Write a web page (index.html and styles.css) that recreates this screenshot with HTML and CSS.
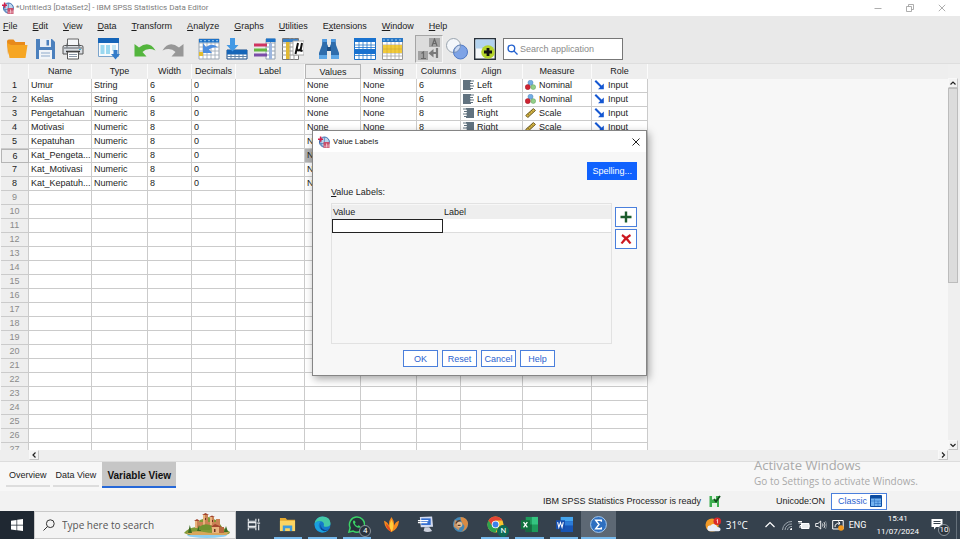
FILE: index.html
```
<!DOCTYPE html>
<html lang="en">
<head>
    <meta charset="UTF-8">
    <meta name="viewport" content="width=device-width, initial-scale=1.0">
    <title>*Untitled3 [DataSet2] - IBM SPSS Statistics Data Editor</title>
    <link rel="stylesheet" href="styles.css">
</head>
<body>
    <!-- Shared icons -->
    <svg class="hidden">
        <symbol id="app" viewBox="0 0 12 12">
            <circle cx="6.4" cy="6" r="5" fill="#bcd5ec" stroke="#3f70b2"/>
            <path d="M2 7.5h9M6.4 1v10M3.5 2.5q-2 4 1 8" stroke="#5582b8" fill="none" stroke-width=".8"/>
            <path d="M0 3.2h5M2.6.5v5.2" stroke="#d3204b" stroke-width="1.5"/>
            <path d="M5.5 6h6v6h-6z" fill="#c9506b"/>
            <path d="M7 11.5v-2M8.5 11.5v-4M10 11.5v-3" stroke="#f6d5dc" stroke-width=".8"/>
        </symbol>
        <symbol id="left" viewBox="0 0 11 10">
            <path d="M0 0h8v10H0z" fill="#61727f"/>
            <path d="M7 1h4M7 3.500h3M7 6h4M7 8.500h3" stroke="#61727f"/>
            <path d="M7 2.300h1M7 4.700h1M7 7.200h1" stroke="#fff"/>
        </symbol>
        <symbol id="right" viewBox="0 0 11 10">
            <path d="M3 0h8v10H3z" fill="#61727f"/>
            <path d="M0 1h4M1 3.500h3M0 6h4M1 8.500h3" stroke="#61727f"/>
            <path d="M3 2.300h1M3 4.700h1M3 7.200h1" stroke="#fff"/>
        </symbol>
        <symbol id="nominal" viewBox="0 0 12 11">
            <circle cx="6" cy="3" r="2.800" fill="#72aee3" stroke="#4b7fb8" stroke-width=".5"/>
            <circle cx="3" cy="7.800" r="2.800" fill="#cf2433" stroke="#97131f" stroke-width=".5"/>
            <circle cx="9" cy="7.800" r="2.700" fill="#93cf88" stroke="#4f9448" stroke-width=".5"/>
        </symbol>
        <symbol id="scale" viewBox="0 0 12 11">
            <path d="M.8 8.200L9.200.6l2.200 2.200-8.400 7.700z" fill="#d5b544" stroke="#5c4a12"/>
            <path d="M3 6.600l1.200 1.200M5 4.600l1.200 1.200M7 2.600l1.200 1.200" stroke="#5c4a12" stroke-width=".8"/>
        </symbol>
        <symbol id="input" viewBox="0 0 10 10">
            <path d="M.8.8l6.500 6.500" stroke="#1457d2" stroke-width="2"/>
            <path d="M9.300 3.500v5.800H3.500z" fill="#1457d2"/>
        </symbol>
    </svg>

    <header class="titlebar">
        <svg class="app-icon"><use href="#app"/></svg>
        <span class="title">*Untitled3 [DataSet2] - IBM SPSS Statistics Data Editor</span>
        <div class="window-buttons">
            <button aria-label="Minimize"><svg viewBox="0 0 8 8"><path d="M.5 4.500h7"/></svg></button>
            <button aria-label="Restore"><svg viewBox="0 0 8 8"><path d="M.5 2.500h5v5h-5zM2.500 2.500v-2h5v5h-2"/></svg></button>
            <button aria-label="Close"><svg viewBox="0 0 8 8"><path d="M.8.8l6.400 6.400M7.200.8L.8 7.200"/></svg></button>
        </div>
    </header>

    <nav class="menubar">
        <button><u>F</u>ile</button>
        <button><u>E</u>dit</button>
        <button><u>V</u>iew</button>
        <button><u>D</u>ata</button>
        <button><u>T</u>ransform</button>
        <button><u>A</u>nalyze</button>
        <button><u>G</u>raphs</button>
        <button><u>U</u>tilities</button>
        <button>E<u>x</u>tensions</button>
        <button><u>W</u>indow</button>
        <button><u>H</u>elp</button>
    </nav>

    <div class="toolbar">
        <div class="tool-group">
            <button aria-label="Open"><svg viewBox="0 0 22 22"><path d="M1 3.500q0-2 2-2h4.500l2 2.500H19v4H4L2 17z" fill="#e88a1a"/><path d="M5 7h16.500l-2 13H3.500L1 5z" fill="#f6a623"/></svg></button>
            <button aria-label="Save"><svg viewBox="0 0 22 22"><path d="M2 1h16l3 3v17H2z" fill="#4b80bd"/><path d="M6 1h11v8H6z" fill="#e9eef4"/><path d="M12.500 2h2.500v5.500h-2.500z" fill="#4b80bd"/><path d="M5 12h13v9H5z" fill="#f1f4f8"/><path d="M7 15h9M7 18h9" stroke="#8da9ca"/></svg></button>
            <button aria-label="Print"><svg viewBox="0 0 22 22"><path d="M5.500 1h11v8h-11z" fill="#f4f6f8" stroke="#666"/><path d="M2.500 7.500h17q1.500 0 1.500 1.500v7H1V9q0-1.500 1.500-1.500z" fill="#d9dde2" stroke="#555"/><path d="M2 10h18M5 9.500V5.500M17 9.500V5.500" stroke="#5b6066"/><path d="M4 13.500h14" stroke="#333" stroke-width="1.500"/><path d="M5.500 14h11v7h-11z" fill="#fff" stroke="#555"/><path d="M7 16.500h8M7 18.500h8" stroke="#8c98a8"/><path d="M17 11.500h2" stroke="#3ab4d8"/></svg></button>
        </div>
        <div class="tool-group">
            <button aria-label="Recall dialogs"><svg viewBox="0 0 22 22"><path d="M.5.500h20v18H.5z" fill="#f7fafc" stroke="#7ba4cc"/><path d="M0 0h21v5H0z" fill="#1464b8"/><path d="M2.500 7h4v9h-4zM8 7h4v9H8z" fill="#9ad8f0"/><path d="M14 7h4v6h-4z" fill="#c5e7f4"/><path d="M15.500 12h4v4h2.500l-4.500 5.500L13 16h2.500z" fill="#347cc9"/></svg></button>
        </div>
        <div class="tool-group">
            <button aria-label="Undo"><svg viewBox="0 0 22 22"><path d="M.5 6v12.500h12l-4-4.500q5-5 13-1.500Q15 1.500 5 9.500z" fill="#53b53d"/></svg></button>
            <button aria-label="Redo"><svg viewBox="0 0 22 22"><path d="M21.500 6v12.500h-12l4-4.500q-5-5-13-1.500Q7 1.500 17 9.500z" fill="#979797"/></svg></button>
        </div>
        <div class="tool-group">
            <button aria-label="Go to case"><svg viewBox="0 0 22 22"><path d="M1 1h20v20H1z" fill="#fff" stroke="#9aa6b2"/><path d="M1 5h20M1 9h20M1 13h20M1 17h20M5 1v20M9 1v20M13 1v20M17 1v20" stroke="#9aa6b2" stroke-width=".8"/><path d="M1 1h20v3.500H1z" fill="#1c72c8"/><path d="M2 2.700h18" stroke="#9fccef" stroke-dasharray="2 2"/><path d="M1 14h4v4H1z" fill="#e3bd2d"/><path d="M5 5v10h9l-3-3.500q4-3 9-2-5-5-12-.5z" fill="#4b8de0"/></svg></button>
            <button aria-label="Go to variable"><svg viewBox="0 0 22 22"><path d="M1 12h20v9H1z" fill="#fff" stroke="#174b87"/><path d="M1 12h20v4.500H1z" fill="#1565b8"/><path d="M1 18.500h20M5 16v5M9 16v5M13 16v5M17 16v5" stroke="#6184aa"/><path d="M4 0h5v7h3.500l-6 6.500L.5 7H4z" fill="#4399e5"/></svg></button>
            <button aria-label="Variables"><svg viewBox="0 0 22 22"><path d="M12 1h9v20h-9z" fill="#fff" stroke="#93a0ae"/><path d="M12 5h9M12 9h9M12 13h9M12 17h9M16.500 1v20" stroke="#93a0ae"/><path d="M12 .500h9.500V4H12z" fill="#1c72c8"/><path d="M15 5h3v16h-3z" fill="#9cb6df"/><path d="M0 7h13" stroke="#d03461" stroke-width="3"/><path d="M0 12h13" stroke="#65b83f" stroke-width="3"/><path d="M0 17h13" stroke="#7a4ca8" stroke-width="3"/></svg></button>
            <button aria-label="Descriptive statistics"><svg viewBox="0 0 22 22"><path d="M.5.500h16v21H.5z" fill="#fff" stroke="#777"/><path d="M0 5h17M0 9h17M0 13h17M0 17h17M8 0v22M12 0v22" stroke="#999"/><path d="M1 1h15v3H1z" fill="#3a80c6"/><path d="M4 4h3.500v17H4z" fill="#e2b932"/><path d="M11 3h11v14H11z" fill="#fff" stroke="#aaa"/><path d="M13.500 16l2.500-11M20 5l-1.500 7.500 2 .5M15 11q1.500 3 4-.5" fill="none" stroke="#111" stroke-width="2"/></svg></button>
        </div>
        <div class="tool-group">
            <button aria-label="Find"><svg viewBox="0 0 22 22"><path d="M4.500 1h4.500v5l1 2v5H9v8H1v-6L4 7zM17.500 1H13v5l-1 2v5h1v8h8v-6L18 7z" fill="#2f6dac"/><path d="M9 9h4v4H9z" fill="#204f82"/><path d="M4.500 1h4.500v3H4.500zM13 1h4.500v3H13z" fill="#4f9be2"/><path d="M1 17h8v4H1zM13 17h8v4h-8z" fill="#5ea7e6"/></svg></button>
        </div>
        <div class="tool-group">
            <button aria-label="Split file"><svg viewBox="0 0 22 22"><path d="M.5.500h21v21H.5z" fill="#fff" stroke="#1c72c8"/><path d="M.5 7h21M.5 17.500h21M5 4v18M9 4v18M13 4v18M17 4v18" stroke="#2a78c8" stroke-width=".8"/><path d="M0 0h22v4H0zM0 11h22v5H0z" fill="#1972cf"/><path d="M0 9.500h22" stroke="#1972cf" stroke-width=".8"/></svg></button>
            <button aria-label="Select cases"><svg viewBox="0 0 22 22"><path d="M.5.500h20v21H.5z" fill="#fff" stroke="#999"/><path d="M.5 7h20M.5 11h20M.5 15h20M.5 18h20M5 0v22M9 0v22M13 0v22M17 0v22" stroke="#a5a5a5" stroke-width=".8"/><path d="M0 0h21v4H0z" fill="#2876c5"/><path d="M1 7h19v8H1z" fill="#f2cb3c"/><path d="M5 7v8M9 7v8M13 7v8M17 7v8M1 11h19" stroke="#c5a12e" stroke-width=".5"/><path d="M1 2h19" stroke="#9fccef" stroke-dasharray="2 2"/></svg></button>
        </div>
        <div class="tool-group last">
            <button class="pressed" aria-label="Value labels" aria-pressed="true"><svg viewBox="0 0 22 22"><path d="M11 0h11v9H11zM0 13h10v9H0z" fill="#a2a2a2"/><path d="M14 8l2.500-7L19 8M15 5.500h3M3.500 15.500L5.500 14v6.500M3 20.500h5" stroke="#686868" fill="none" stroke-width="1.200"/><path d="M19 10v10M20 15h-7" stroke="#7b7b7b" stroke-width="2.200"/><path d="M15.500 11v8.500L10.500 15.300z" fill="#7b7b7b"/></svg></button>
            <button aria-label="Use variable sets"><svg viewBox="0 0 22 22"><circle cx="7.500" cy="7.500" r="7" fill="#f4f7fb" stroke="#9aa4ae"/><circle cx="14.500" cy="14" r="7" fill="#7ea3e6" stroke="#4f79c4"/><path d="M14.500 7A7 7 0 0 0 8 14.500 7 7 0 0 0 14.500 7z" fill="#cbdaf4" stroke="#7992b9"/></svg></button>
            <button aria-label="Customize toolbar"><svg viewBox="0 0 22 22"><path d="M.7.700h20.600v20.600H.7z" fill="#f5f8fa" stroke="#29313a" stroke-width="1.400"/><path d="M1.500 1.500h19v9h-19z" fill="#b3d3ef"/><circle cx="14" cy="14" r="6.800" fill="#b5d42c"/><path d="M14 10v8M10 14h8" stroke="#111" stroke-width="2.800"/></svg></button>
            <label class="search">
                <svg viewBox="0 0 12 12"><circle cx="4.800" cy="4.800" r="3.600"/><path d="M7.500 7.500l4 4"/></svg>
                <input type="text" placeholder="Search application" aria-label="Search application">
            </label>
        </div>
    </div>

    <main class="editor">
        <div class="grid">
            <table class="variables">
                <colgroup>
                    <col class="col-index"><col class="col-name"><col class="col-type"><col class="col-width">
                    <col class="col-width"><col class="col-label"><col class="col-values"><col class="col-values">
                    <col class="col-width"><col class="col-align"><col class="col-label"><col class="col-values">
                </colgroup>
                <thead>
                    <tr><th></th><th>Name</th><th>Type</th><th>Width</th><th>Decimals</th><th>Label</th><th class="current">Values</th><th>Missing</th><th>Columns</th><th>Align</th><th>Measure</th><th>Role</th></tr>
                </thead>
                <tbody>
                    <tr><th>1</th><td>Umur</td><td>String</td><td>6</td><td>0</td><td></td><td>None</td><td>None</td><td>6</td><td><svg><use href="#left"/></svg>Left</td><td><svg><use href="#nominal"/></svg>Nominal</td><td><svg><use href="#input"/></svg>Input</td></tr>
                    <tr><th>2</th><td>Kelas</td><td>String</td><td>6</td><td>0</td><td></td><td>None</td><td>None</td><td>6</td><td><svg><use href="#left"/></svg>Left</td><td><svg><use href="#nominal"/></svg>Nominal</td><td><svg><use href="#input"/></svg>Input</td></tr>
                    <tr><th>3</th><td>Pengetahuan</td><td>Numeric</td><td>8</td><td>0</td><td></td><td>None</td><td>None</td><td>8</td><td><svg><use href="#right"/></svg>Right</td><td><svg><use href="#scale"/></svg>Scale</td><td><svg><use href="#input"/></svg>Input</td></tr>
                    <tr><th>4</th><td>Motivasi</td><td>Numeric</td><td>8</td><td>0</td><td></td><td>None</td><td>None</td><td>8</td><td><svg><use href="#right"/></svg>Right</td><td><svg><use href="#scale"/></svg>Scale</td><td><svg><use href="#input"/></svg>Input</td></tr>
                    <tr><th>5</th><td>Kepatuhan</td><td>Numeric</td><td>8</td><td>0</td><td></td><td>None</td><td></td><td></td><td></td><td></td><td></td></tr>
                    <tr><th class="current">6</th><td>Kat_Pengeta...</td><td>Numeric</td><td>8</td><td>0</td><td></td><td class="selected">None</td><td></td><td></td><td></td><td></td><td></td></tr>
                    <tr><th>7</th><td>Kat_Motivasi</td><td>Numeric</td><td>8</td><td>0</td><td></td><td>None</td><td></td><td></td><td></td><td></td><td></td></tr>
                    <tr><th>8</th><td>Kat_Kepatuh...</td><td>Numeric</td><td>8</td><td>0</td><td></td><td>None</td><td></td><td></td><td></td><td></td><td></td></tr>
                </tbody>
                <tbody class="blank">
                    <tr><th>9</th><td></td><td></td><td></td><td></td><td></td><td></td><td></td><td></td><td></td><td></td><td></td></tr>
                    <tr><th>10</th><td></td><td></td><td></td><td></td><td></td><td></td><td></td><td></td><td></td><td></td><td></td></tr>
                    <tr><th>11</th><td></td><td></td><td></td><td></td><td></td><td></td><td></td><td></td><td></td><td></td><td></td></tr>
                    <tr><th>12</th><td></td><td></td><td></td><td></td><td></td><td></td><td></td><td></td><td></td><td></td><td></td></tr>
                    <tr><th>13</th><td></td><td></td><td></td><td></td><td></td><td></td><td></td><td></td><td></td><td></td><td></td></tr>
                    <tr><th>14</th><td></td><td></td><td></td><td></td><td></td><td></td><td></td><td></td><td></td><td></td><td></td></tr>
                    <tr><th>15</th><td></td><td></td><td></td><td></td><td></td><td></td><td></td><td></td><td></td><td></td><td></td></tr>
                    <tr><th>16</th><td></td><td></td><td></td><td></td><td></td><td></td><td></td><td></td><td></td><td></td><td></td></tr>
                    <tr><th>17</th><td></td><td></td><td></td><td></td><td></td><td></td><td></td><td></td><td></td><td></td><td></td></tr>
                    <tr><th>18</th><td></td><td></td><td></td><td></td><td></td><td></td><td></td><td></td><td></td><td></td><td></td></tr>
                    <tr><th>19</th><td></td><td></td><td></td><td></td><td></td><td></td><td></td><td></td><td></td><td></td><td></td></tr>
                    <tr><th>20</th><td></td><td></td><td></td><td></td><td></td><td></td><td></td><td></td><td></td><td></td><td></td></tr>
                    <tr><th>21</th><td></td><td></td><td></td><td></td><td></td><td></td><td></td><td></td><td></td><td></td><td></td></tr>
                    <tr><th>22</th><td></td><td></td><td></td><td></td><td></td><td></td><td></td><td></td><td></td><td></td><td></td></tr>
                    <tr><th>23</th><td></td><td></td><td></td><td></td><td></td><td></td><td></td><td></td><td></td><td></td><td></td></tr>
                    <tr><th>24</th><td></td><td></td><td></td><td></td><td></td><td></td><td></td><td></td><td></td><td></td><td></td></tr>
                    <tr><th>25</th><td></td><td></td><td></td><td></td><td></td><td></td><td></td><td></td><td></td><td></td><td></td></tr>
                    <tr><th>26</th><td></td><td></td><td></td><td></td><td></td><td></td><td></td><td></td><td></td><td></td><td></td></tr>
                    <tr><th>27</th><td></td><td></td><td></td><td></td><td></td><td></td><td></td><td></td><td></td><td></td><td></td></tr>
                </tbody>
            </table>
            <div class="grid-rest"></div>
        </div>
        <div class="scroll-v">
            <button aria-label="Scroll up"><svg viewBox="0 0 8 8"><path d="M1.500 5.500L4 3l2.500 2.500"/></svg></button>
            <div class="thumb"></div>
            <button aria-label="Scroll down"><svg viewBox="0 0 8 8"><path d="M1.500 3L4 5.500 6.500 3"/></svg></button>
        </div>
    </main>

    <div class="scroll-h">
        <button aria-label="Scroll left"><svg viewBox="0 0 8 8"><path d="M5.500 1.500L3 4l2.500 2.500"/></svg></button>
        <button aria-label="Scroll right"><svg viewBox="0 0 8 8"><path d="M3 1.500L5.500 4 3 6.500"/></svg></button>
    </div>

    <div class="views">
        <button>Overview</button>
        <button>Data View</button>
        <button class="active">Variable View</button>
    </div>

    <div class="statusbar">
        <span>IBM SPSS Statistics Processor is ready</span>
        <svg class="ready" viewBox="0 0 12 12"><path d="M.5 1h9.500v11H.5z" fill="#3cae4e"/><path d="M3 1h4v3.500H3zM3 8h5v4H3z" fill="#e3f4e5"/><path d="M5 4l2 2.500L11 1" fill="none" stroke="#114c1c" stroke-width="1.800"/></svg>
        <span class="unicode">Unicode:ON</span>
        <button class="outline classic">Classic <svg viewBox="0 0 12 12"><path d="M.5.500h11v11H.5z" fill="#73b2ef" stroke="#0c4ca0"/><path d="M1 1h10v2.500H1z" fill="#0c4ca0"/><path d="M1 6h10M4.500 4v7M8 6v5M4.500 8.500H11" stroke="#1f63b8" stroke-width=".5"/></svg></button>
    </div>

    <div class="watermark">
        <strong>Activate Windows</strong>
        <span>Go to Settings to activate Windows.</span>
    </div>

    <section class="dialog" role="dialog" aria-labelledby="dialogTitle">
        <div class="dialog-title">
            <svg class="app-icon"><use href="#app"/></svg>
            <span id="dialogTitle">Value Labels</span>
            <button aria-label="Close"><svg viewBox="0 0 8 8"><path d="M.5.500l7 7M7.500.5l-7 7"/></svg></button>
        </div>
        <div class="dialog-body">
            <button class="primary">Spelling...</button>
            <div class="caption" id="listCaption"><u>V</u>alue Labels:</div>
            <div class="list-row">
                <div class="list">
                    <table aria-labelledby="listCaption">
                        <thead><tr><th class="value">Value</th><th>Label</th></tr></thead>
                        <tbody><tr>
                            <td><input class="focused" type="text" aria-label="Value"></td>
                            <td><input type="text" aria-label="Label"></td>
                        </tr></tbody>
                    </table>
                </div>
                <div class="list-buttons">
                    <button class="outline" aria-label="Add"><svg viewBox="0 0 12 12"><path d="M6 .5v11M.5 6h11" stroke="#1b5c2c" stroke-width="2.400"/></svg></button>
                    <button class="outline" aria-label="Remove"><svg viewBox="0 0 12 12"><path d="M2 2q5 3 8.500 8.500M10.500 2Q5 5 1.500 10.500" stroke="#cc1720" stroke-width="2.200" fill="none"/></svg></button>
                </div>
            </div>
            <div class="actions">
                <button class="outline">OK</button>
                <button class="outline">Reset</button>
                <button class="outline">Cancel</button>
                <button class="outline">Help</button>
            </div>
        </div>
    </section>

    <footer class="taskbar">
        <button class="start" aria-label="Start"><svg viewBox="0 0 12 12"><path d="M0 1.700l5.500-.8v4.800H0zM6.200.8L12 0v5.700H6.200zM0 6.400h5.500v4.800L0 10.400zM6.200 6.400H12V12l-5.800-.8z" fill="#fff"/></svg></button>
        <label class="task-search">
            <svg class="glass" viewBox="0 0 12 12"><circle cx="7.300" cy="4.700" r="3.900"/><path d="M4.500 7.500L.5 11.500"/></svg>
            <input type="text" placeholder="Type here to search" aria-label="Type here to search">
            <svg class="castle" viewBox="0 0 48 25">
                <ellipse cx="24" cy="22" rx="20" ry="3" fill="#8fd0f2"/>
                <path d="M1 20q4-5 12-6l4-7 9-3 9 4 4 6 8 5q0 3-8 3H6z" fill="#7f9a35"/>
                <path d="M3 20q10-3 18-1t25 0l-3 3H8z" fill="#d9a65c"/>
                <path d="M12 8h4v7h-4zM20 2h5v10h-5zM27 4h4v8h-4zM33 6h4v7h-4zM16 9h17v6H16z" fill="#c98255"/>
                <path d="M20 2h2v10h-2zM27 4h2v8h-2zM12 8h2v7h-2zM29 14h9v6h-9z" fill="#e9b37d"/>
                <path d="M19 2l3.500-2L26 2zM26 4l3-1.500L32 4zM11 8l3-2 3 2zM28 14l4-3 7 3z" fill="#a2452e"/>
                <path d="M36 14h5v6h-5z" fill="#b6683f"/>
                <path d="M5 20l1.800-8L9 20zM14 18l2-6 2 6zM22 17l2-5 2 5zM41 19l2-6 2 6z" fill="#3c6b22"/>
                <path d="M16 14q6-5 13-1l-2 4H16z" fill="#6f9130"/>
                <path d="M31 16h1.500v3H31zM22 5h1v2h-1zM29 7h1v2h-1z" fill="#6d3420"/>
            </svg>
        </label>
        <div class="apps">
            <button aria-label="Task view"><svg viewBox="0 0 18 18"><path d="M3.500 3v2.500h8V3M3.500 15v-2.500h8V15M3.500 7h8v4h-8zM14.500 3v3M14.500 9v6M13 7.500h3" fill="none" stroke="#e8ebee" stroke-width="1.200"/></svg></button>
            <button class="open" aria-label="File Explorer"><svg viewBox="0 0 18 18"><path d="M1 2h6l1.500 2H17v12H1z" fill="#e6a92d"/><path d="M1 5h16v11H1z" fill="#fcd462"/><path d="M4 10h10v6h-2.500v-3h-5v3H4z" fill="#3f9bdc"/></svg></button>
            <button class="open" aria-label="Edge"><svg viewBox="0 0 18 18"><circle cx="9" cy="9" r="8.500" fill="#1479ca"/><path d="M.6 8Q2 .8 9 .5q8 .3 8.500 7 0 4-4.500 4-3.500 0-2.500-2Q11 6.500 7.500 5.500 3 5 .6 8z" fill="#44c9a7"/><path d="M.6 8Q3.500 4.500 7 6q-3.500 3-1 7 3 3.500 9 1.500-3 4-8 2.800Q.5 15 .6 8z" fill="#1aa0df"/><path d="M7.500 8.500q-1 5 4 6.300 2.500.5 5-1-3 2.700-6.500 2.200-5-2-2.500-7.500z" fill="#0b4694"/></svg></button>
            <button class="open" aria-label="WhatsApp"><svg viewBox="0 0 18 18"><path d="M1 17l1.300-4.500A8 8 0 1 1 5.500 16z" fill="#26333a" stroke="#3bd366" stroke-width="1.600"/><path d="M5.500 5q2-1 2.500 2l-.8 1.200q1 2 2.800 2.600L11 9.700q3 .8 2 2.300-2 1.500-5-1-3.500-3-2.500-6z" fill="#3bd366"/></svg><span class="count">4</span></button>
            <button aria-label="Fire"><svg viewBox="0 0 18 18"><path d="M9 17Q2 14 1 5q4 1 5 5 0-5 3-9 3 4 3 9 1-4 5-5-1 9-8 12z" fill="#f58b1f"/><path d="M9 17q-4-6 0-13 4 7 0 13z" fill="#ffcd3a"/><path d="M9 17Q4 15 3 8q4 3 6 9z" fill="#e34b20"/></svg></button>
            <button aria-label="Computer"><svg viewBox="0 0 18 18"><path d="M3 1l13-.5 1 11L4 12z" fill="#d3dbef"/><path d="M4.500 2.500h10v7h-10z" fill="#326dcf"/><path d="M1 5h11M1 7h10" stroke="#fff" stroke-width="1.300"/><path d="M8 12h5l3 4q-5 2-9 0z" fill="#cdd2df"/></svg></button>
            <button aria-label="Globe"><svg viewBox="0 0 18 18"><circle cx="9" cy="9" r="8" fill="#4487b5"/><path d="M9 1q7 0 8 7-1 8-8 9 5-3 4-7-4-4-4-9z" fill="#d98b44"/><path d="M3 4l7 4-3 7-5-4z" fill="#c99466"/><circle cx="8" cy="9" r="3" fill="#e5bd91"/><path d="M4 8q2-4 5-3M6 10h3" stroke="#593829" fill="none" stroke-width="1.300"/></svg></button>
            <button class="open" aria-label="Chrome"><svg viewBox="0 0 18 18"><circle cx="9" cy="9" r="8.500" fill="#f9c42e"/><path d="M1.600 4.700A8.500 8.500 0 0 1 16.400 4.800H9L5.500 11z" fill="#e44434"/><path d="M1.600 4.700A8.500 8.500 0 0 0 9 17.500L12 11H6z" fill="#2da34e"/><circle cx="9" cy="9" r="4" fill="#fff"/><circle cx="9" cy="9" r="3.100" fill="#3c81eb"/></svg><span class="count profile">N</span></button>
            <button class="open" aria-label="Excel"><svg viewBox="0 0 18 18"><path d="M5 1h13v16H5z" fill="#1d9a5b"/><path d="M11.500 1H18v8h-6.500z" fill="#34c481"/><path d="M5 9h6.500v8H5z" fill="#176b41"/><path d="M0 4.500h9.500V14H0z" fill="#0f713d"/><path d="M2.700 6.500l4 5.500M6.700 6.500l-4 5.500" stroke="#fff" stroke-width="1.400"/></svg></button>
            <button class="open" aria-label="Word"><svg viewBox="0 0 18 18"><path d="M5 1h13v16H5z" fill="#1755b5"/><path d="M5 1h13v4.500H5z" fill="#45a5ee"/><path d="M5 5.500h13V10H5z" fill="#2c7cd8"/><path d="M0 4.500h9.500V14H0z" fill="#164fae"/><path d="M1.700 6.500L3 12l1.700-5 1.700 5 1.300-5.500" fill="none" stroke="#fff" stroke-width="1.100"/></svg></button>
            <button class="open focus" aria-label="SPSS"><svg viewBox="0 0 18 18"><circle cx="9" cy="9" r="8.400" fill="#2e6fc0" stroke="#a9cdf2"/><path d="M12 6V4.500H6L9.500 9 6 13.500h6V12" fill="none" stroke="#fff" stroke-width="1.500"/></svg></button>
        </div>
        <div class="tray">
            <button class="weather"><svg viewBox="0 0 18 16"><circle cx="7.500" cy="8" r="7" fill="#f39a26"/><path d="M5 14.500a3 3 0 0 1 1-6 4 4 0 0 1 7 1.500q3.500.3 3.500 2.500t-2.500 2z" fill="#e8eef8"/><circle cx="13" cy="4" r="4" fill="#d9292b"/><path d="M12.300 3l1-.8v4" stroke="#fff" fill="none" stroke-width=".8"/></svg>31°C</button>
            <div class="tray-icons">
                <svg viewBox="0 0 12 12"><path d="M1.500 8L6 3.500 10.500 8" fill="none" stroke="#fff" stroke-width="1.200"/></svg>
                <svg viewBox="0 0 12 12"><path d="M1.500 11A9 9 0 0 1 11 2.500M4 11a6.500 6.500 0 0 1 7-6M6.500 11A4 4 0 0 1 11 7.500" fill="none" stroke="#9fa8b0"/><path d="M9 11q0-2 2-2v2z" fill="#fff"/></svg>
                <svg viewBox="0 0 12 12"><path d="M3.500 4.500h7.500v5H3.500z" fill="#e9ecee" stroke="#fff"/><path d="M12 6v2M0 2.500h4M.5 4h3.500v2.500H2V9" stroke="#fff" fill="none"/></svg>
                <svg viewBox="0 0 12 12"><path d="M.7 4.500H3L5.700 2v8L3 7.500H.7z" fill="none" stroke="#fff" stroke-width=".9"/><path d="M7.500 4.500q1 1.500 0 3M9 3q2 3 0 6" fill="none" stroke="#fff" stroke-width=".8"/><path d="M10.500 2q2.500 4 0 8" fill="none" stroke="#8d969e" stroke-width=".8"/></svg>
                <svg viewBox="0 0 12 12"><path d="M.7 1.500h10.500V10H.7z" fill="none" stroke="#fff"/><path d="M3 8q0-4 5-4M6 2.500L8 4 6.500 6" fill="none" stroke="#fff"/><circle cx="9" cy="9" r="2.800" fill="#f3981c"/></svg>
                <span>ENG</span>
            </div>
            <div class="clock"><span>15:41</span><span>11/07/2024</span></div>
            <button class="notices" aria-label="Notifications"><svg viewBox="0 0 12 12"><path d="M.5 1h11v8H5l-2 2.500V9H.5z" fill="#fff"/><path d="M2.500 3.500h7M2.500 5.500h7" stroke="#36424d"/></svg><span class="count">10</span></button>
        </div>
    </footer>
</body>
</html>
```

FILE: styles.css
```
* {
    box-sizing: border-box;
}
body {
    display: flex;
    flex-direction: column;
    position: relative;
    height: 100vh;
    margin: 0;
    overflow: hidden;
    background-color: #f7f7f7;
    color: #1c1c1c;
    font: 9px/12px "Liberation Sans", Arial, sans-serif;
}
button, input {
    margin: 0;
    padding: 0;
    border: none;
    background: none;
    color: inherit;
    font: inherit;
}
input {
    min-width: 0;
    outline: none;
}
svg {
    display: block;
    flex: none;
}
.hidden {
    display: none;
}

/* Title bar */
.titlebar {
    display: flex;
    flex: none;
    align-items: center;
    height: 16px;
    padding-left: 2px;
    background-color: #fff;
    color: #7d7d7d;
    font: 8px/14px Roboto, "Segoe UI", sans-serif;
}
.app-icon {
    width: 12px;
    height: 12px;
}
.title {
    margin-left: 2px;
}
.window-buttons {
    display: flex;
    margin-left: auto;
    padding-right: 2px;
}
.window-buttons button {
    display: grid;
    place-items: center;
    width: 32px;
    height: 14px;
}
.window-buttons svg {
    width: 8px;
    height: 8px;
    fill: none;
    stroke: #999;
    stroke-width: 0.8;
}

/* Menus and toolbar */
.menubar {
    display: flex;
    flex: none;
    align-items: center;
    gap: 15px;
    height: 19px;
    padding-left: 3px;
    background-color: #e9e9e9;
}
.toolbar {
    display: flex;
    flex: none;
    gap: 8px;
    height: 29px;
    padding-left: 3px;
    border-bottom: 1px solid #dedede;
    background-color: #e9e9e9;
}
.tool-group {
    display: flex;
    align-items: center;
}
.tool-group button {
    display: grid;
    place-items: center;
    width: 28px;
    height: 28px;
}
.tool-group svg {
    width: 22px;
    height: 22px;
}
.tool-group .pressed {
    border: 1px solid;
    border-color: #a5a5a5 #f5f5f5 #f5f5f5 #a5a5a5;
    background-color: #dcdcdc;
}
.tool-group .search {
    display: flex;
    align-items: center;
    gap: 2px;
    width: 120px;
    height: 22px;
    margin-left: 4px;
    padding-left: 3px;
    border: 1px solid #777;
    background-color: #fff;
}
.search svg {
    width: 11px;
    height: 11px;
    fill: none;
    stroke: #2462cf;
    stroke-width: 1.5;
}
.search input {
    flex: 1;
}
.search input::placeholder {
    color: #8a8a8a;
    opacity: 1;
}

/* Variable grid */
.editor {
    display: flex;
    flex: 1;
    min-height: 0;
}
.grid {
    display: flex;
    flex: 1;
    align-items: flex-start;
    overflow: hidden;
    padding-left: 1px;
}
.grid-rest {
    flex: 1;
    height: 15px;
    background-color: #eee;
}
.variables {
    flex: none;
    width: 647px;
    border-spacing: 0;
    table-layout: fixed;
}
.col-index { width: 28px; }
.col-name { width: 63px; }
.col-type { width: 56px; }
.col-width { width: 44px; }
.col-label { width: 69px; }
.col-values { width: 56px; }
.col-align { width: 62px; }
.variables th,
.variables td {
    height: 14px;
    padding: 0 0 0 2px;
    border-right: 1px solid #cbcbcb;
    border-bottom: 1px solid #cbcbcb;
    background-color: #fff;
    line-height: 13px;
    font-weight: normal;
    text-align: left;
    white-space: nowrap;
}
.variables th {
    padding: 0;
    background-color: #eee;
    text-align: center;
}
.variables thead th {
    height: 15px;
    padding-top: 1px;
    border-color: #eee #fbfbfb #eee #eee;
}
.variables th.current {
    border: 1px solid #b5b5b5;
    line-height: 12px;
}
.variables thead th.current {
    padding: 0;
}
.variables .blank th {
    color: #8a8a8a;
}
.variables .selected {
    background-color: #b2b2b2;
}
.variables td svg {
    display: inline-block;
    width: 11px;
    height: 10px;
    margin-right: 3px;
    vertical-align: -2px;
}

/* Scroll bars */
.scroll-v {
    display: flex;
    flex: none;
    flex-direction: column;
    justify-content: space-between;
    width: 12px;
    padding: 14px 2px 0 0;
    background-color: #efefef;
}
.thumb {
    flex: none;
    height: 195px;
    margin-bottom: auto;
    border: 1px solid #bcbcbc;
    background-color: #dcdcdc;
}
.scroll-h {
    display: flex;
    flex: none;
    justify-content: space-between;
    height: 12px;
    padding: 0 12px 1px 29px;
    border-bottom: 1px solid #ddd;
    background-color: #eee;
}
.scroll-v button,
.scroll-h button {
    display: grid;
    place-items: center;
    width: 10px;
    height: 10px;
    border: 1px solid;
    border-color: #f8f8f8 #c4c4c4 #c4c4c4 #f8f8f8;
    background-color: #f3f3f3;
}
.scroll-v svg,
.scroll-h svg {
    width: 8px;
    height: 8px;
    fill: none;
    stroke: #222;
    stroke-width: 1.2;
}

/* View tabs */
.views {
    display: flex;
    flex: none;
    gap: 3px;
    height: 29px;
    padding: 0 0 3px 6px;
}
.views button {
    padding: 3px 3px 0;
    border-bottom: 2px solid #ddd;
    margin-bottom: 1px;
}
.views .active {
    margin: 0;
    padding: 4px 5px 0;
    border-bottom-color: #2668d8;
    background-color: #c6c6c6;
    color: #111;
    font-size: 10px;
    font-weight: bold;
}

/* Status bar */
.statusbar {
    display: flex;
    flex: none;
    align-items: center;
    justify-content: flex-end;
    height: 20px;
    padding-right: 73px;
    background-color: #f2f2f2;
}
.ready {
    width: 12px;
    height: 12px;
    margin-left: 8px;
}
.unicode {
    margin: 0 6px 0 55px;
}
.outline {
    border: 1px solid #4a7fdc;
    background-color: #fff;
    color: #2a62cf;
}
.classic {
    display: flex;
    align-items: center;
    gap: 3px;
    height: 17px;
    padding: 0 4px 0 6px;
}
.classic svg {
    width: 12px;
    height: 12px;
}
.watermark {
    position: absolute;
    right: 39px;
    bottom: 51px;
    display: flex;
    flex-direction: column;
    width: 167px;
    color: #a9a9a9;
    font: 10px/14px "Open Sans", "Segoe UI", sans-serif;
    white-space: nowrap;
}
.watermark strong {
    font-size: 13px;
    font-weight: normal;
    line-height: 18px;
}

/* Value Labels dialog */
.dialog {
    position: absolute;
    top: 130px;
    left: 312px;
    width: 335px;
    border: 1px solid #858585;
    background-color: #f7f7f7;
    box-shadow: 2px 3px 8px rgba(0,0,0,0.35);
}
.dialog-title {
    display: flex;
    align-items: center;
    height: 21px;
    padding: 0 6px 0 5px;
    background-color: #fff;
    font: 8px/14px Roboto, "Segoe UI", sans-serif;
}
.dialog-title span {
    margin-left: 3px;
}
.dialog-title button {
    margin-left: auto;
}
.dialog-title button svg {
    width: 8px;
    height: 8px;
    stroke: #222;
}
.dialog-body {
    display: flex;
    flex-direction: column;
    padding: 10px 9px 8px 18px;
}
.primary {
    align-self: flex-end;
    height: 18px;
    padding: 0 5px;
    background-color: #1062fe;
    color: #fff;
}
.caption {
    margin: 6px 0 5px;
}
.list-row {
    display: flex;
    gap: 3px;
}
.list {
    flex: 1;
    height: 141px;
    padding-top: 1px;
    border: 1px solid #e2e2e2;
}
.list table {
    width: 100%;
    border-spacing: 0;
    table-layout: fixed;
}
.list th {
    height: 14px;
    padding: 0 1px;
    background-color: #eee;
    font-weight: normal;
    text-align: left;
}
.list .value {
    width: 111px;
}
.list td {
    padding: 0;
}
.list input {
    display: block;
    width: 100%;
    height: 14px;
    border-bottom: 1px solid #ddd;
    background-color: #fff;
}
.list .focused {
    border: 1px solid #222;
}
.list-buttons {
    display: flex;
    flex-direction: column;
    gap: 2px;
    padding-top: 4px;
}
.list-buttons button {
    display: grid;
    place-items: center;
    width: 22px;
    height: 20px;
}
.list-buttons svg {
    width: 12px;
    height: 12px;
}
.actions {
    display: flex;
    justify-content: center;
    gap: 4px;
    margin: 6px 10px 0 0;
}
.actions button {
    width: 35px;
    height: 17px;
}

/* Taskbar */
.taskbar {
    display: flex;
    flex: none;
    height: 28px;
    background-color: #35414d;
    color: #fff;
    font: 9px/13px Roboto, "Segoe UI", sans-serif;
}
.start {
    display: grid;
    place-items: center;
    width: 34px;
    background-color: #1f2832;
}
.start svg {
    width: 12px;
    height: 12px;
}
.task-search {
    display: flex;
    flex: none;
    align-items: center;
    gap: 7px;
    width: 202px;
    padding: 0 4px 0 8px;
    border: 1px solid #c9c9c9;
    background-color: #f3f3f3;
    color: #444;
    font: 10px/13px "Open Sans", "Segoe UI", sans-serif;
}
.glass {
    width: 12px;
    height: 12px;
    fill: none;
    stroke: #333;
}
.task-search input {
    flex: 1;
}
.task-search input::placeholder {
    color: #555;
    opacity: 1;
}
.castle {
    width: 48px;
    height: 25px;
}
.apps {
    display: grid;
    flex: none;
    grid-template-columns: repeat(11, 1fr);
    width: 380px;
}
.apps button {
    display: grid;
    place-items: center;
    position: relative;
    margin: 0 3px;
    border-bottom: 2px solid transparent;
}
.apps svg {
    width: 17px;
    height: 17px;
}
.apps .open {
    border-bottom-color: #76b9ed;
}
.apps .focus {
    margin: 0;
    background-color: #5d6874;
}
.count {
    position: absolute;
    right: 0;
    bottom: 0;
    width: 12px;
    height: 12px;
    border: 1px solid #8b949c;
    border-radius: 50%;
    background-color: #2b343d;
    color: #fff;
    font-size: 8px;
    line-height: 10px;
    text-align: center;
}
.profile {
    border-color: #0d6b55;
    background-color: #0d6b55;
}
.tray {
    display: flex;
    align-items: center;
    gap: 10px;
    margin-left: auto;
    padding-right: 3px;
}
.weather {
    display: flex;
    align-items: center;
    gap: 4px;
    font: 10px/13px "Open Sans", "Segoe UI", sans-serif;
}
.weather svg {
    width: 17px;
    height: 16px;
}
.tray-icons {
    display: flex;
    align-items: center;
    gap: 5px;
    margin-left: 6px;
}
.tray-icons svg {
    width: 12px;
    height: 12px;
}
.clock {
    display: flex;
    flex-direction: column;
    font-size: 8px;
    text-align: center;
}
.notices {
    position: relative;
    padding: 7px 13px 9px 2px;
    border-right: 1px solid #65707a;
}
.notices svg {
    width: 12px;
    height: 12px;
}
.notices .count {
    right: 6px;
    bottom: 3px;
}
```
